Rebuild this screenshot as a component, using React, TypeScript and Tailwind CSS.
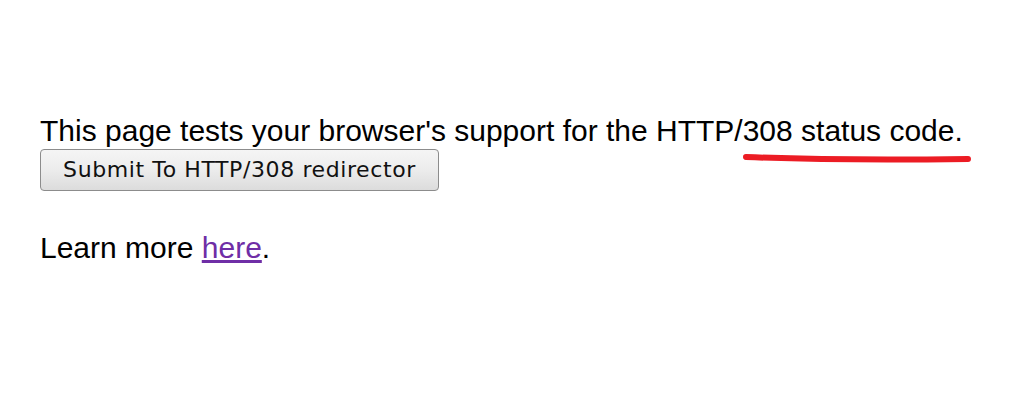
export default function App() {
    return (
        <div className="relative h-[400px] w-[1024px] bg-white">
            <div className="px-[40px] pt-[113px] font-['Liberation_Sans',Arial,sans-serif] text-[30px] leading-[36px] text-black">
                <p>This page tests your browser's support for the HTTP/308 status code.</p>
                <button
                    type="button"
                    className="flex h-[42px] w-[399px] items-center justify-center rounded-[4px] border border-[#8c8c8c] bg-gradient-to-b from-[#f5f5f5] via-[#ececec] to-[#dcdcdc] font-['DejaVu_Sans',sans-serif] text-[22px] tracking-[0.6px] text-[#111]"
                >
                    Submit To HTTP/308 redirector
                </button>
                <p className="mt-[39px]">
                    Learn more{' '}
                    <a href="#" className="text-[#6f2ea6] underline">
                        here
                    </a>
                    .
                </p>
            </div>

            {/* red annotation */}
            <svg className="absolute left-[738px] top-[150px]" width="240" height="20" viewBox="0 0 240 20">
                <path d="M8 7 C 80 10, 160 10, 230 9" stroke="#ec1c24" strokeWidth="6" strokeLinecap="round" fill="none" />
            </svg>
        </div>
    );
}
